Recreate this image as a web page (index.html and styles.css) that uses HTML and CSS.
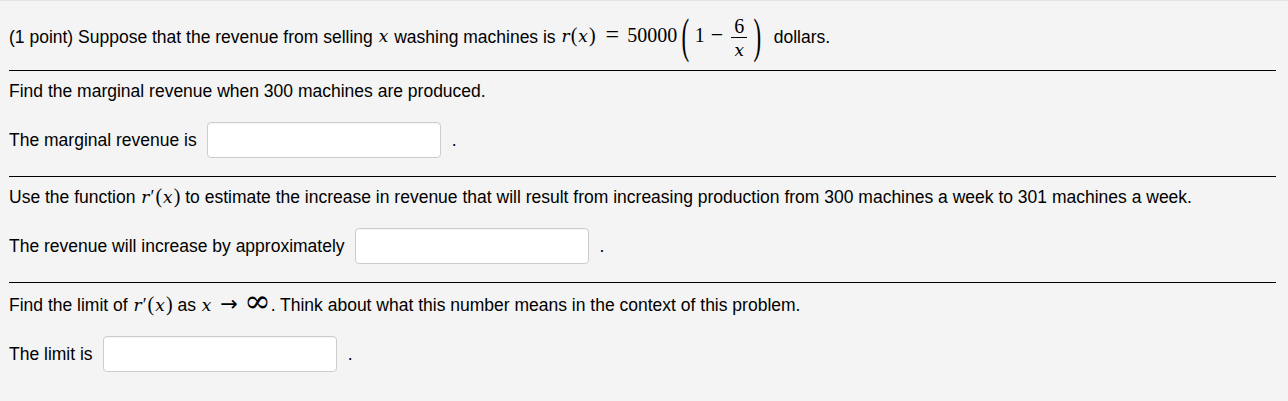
FILE: index.html
```html
<!DOCTYPE html>
<html>
<head>
<meta charset="utf-8">
<link rel="stylesheet" href="styles.css">
</head>
<body>
<div class="topbar"></div>
<div class="problem">
  <div class="intro">
    <span class="line">(1 point) Suppose that the revenue from selling <span class="math"><i class="v">x</i></span> washing machines is <span class="math"><i class="v">r</i>(<i class="v">x</i>)<span class="rel">=</span>50000<span class="big">(</span>1<span class="bin">−</span><span class="frac"><span class="num">6</span><span class="den"><i class="v">x</i></span></span><span class="big">)</span></span> dollars.</span>
  </div>
  <hr class="rule">
  <section class="part">
    <p class="q">Find the marginal revenue when 300 machines are produced.</p>
    <div class="answer"><span>The marginal revenue is</span><input class="box" type="text"><span class="dot">.</span></div>
  </section>
  <hr class="rule">
  <section class="part">
    <p class="q">Use the function <span class="math"><i class="v">r</i><span class="prime">′</span>(<i class="v">x</i>)</span> to estimate the increase in revenue that will result from increasing production from 300 machines a week to 301 machines a week.</p>
    <div class="answer"><span>The revenue will increase by approximately</span><input class="box" type="text"><span class="dot">.</span></div>
  </section>
  <hr class="rule">
  <section class="part">
    <p class="q">Find the limit of <span class="math"><i class="v">r</i><span class="prime">′</span>(<i class="v">x</i>)</span> as <span class="math"><i class="v">x</i><span class="arrow">→</span><span class="inf">∞</span></span>. Think about what this number means in the context of this problem.</p>
    <div class="answer"><span>The limit is</span><input class="box" type="text"><span class="dot">.</span></div>
  </section>
</div>
</body>
</html>
```
FILE: styles.css
```css
html, body {
  margin: 0;
  padding: 0;
  background: #f4f4f4;
  height: 100%;
}
body {
  font-family: "Liberation Sans", Arial, sans-serif;
  font-size: 17.5px;
  color: #000;
}
.topbar {
  height: 1px;
  background: #e4e4e4;
}
.problem {
  margin: 0 12px 0 9px;
}
.intro {
  height: 65px;
  padding-top: 4px;
  display: flex;
  align-items: center;
  line-height: 20px;
}
.math {
  font-family: "Liberation Serif", "Times New Roman", serif;
  font-size: 20px;
  line-height: 16px;
  white-space: nowrap;
}
.math .v {
  font-family: "DejaVu Serif", serif;
  font-style: italic;
  font-size: 17px;
  margin: 0 1px;
}
.rel {
  font-size: 24px;
  margin: 0 8px 0 10px;
}
.bin {
  font-size: 22px;
  margin: 0 6px;
}
.prime {
  font-size: 18px;
  margin-right: 1px;
}
.arrow {
  font-family: "DejaVu Sans", sans-serif;
  font-size: 21px;
  margin: 0 6px 0 8px;
}
.inf {
  font-family: "DejaVu Serif", serif;
  font-size: 32px;
  vertical-align: -1px;
}
.big {
  display: inline-block;
  transform: scale(1.15, 2.4);
  margin: 0 6px 0 5px;
  font-weight: 300;
}
.frac {
  display: inline-flex;
  flex-direction: column;
  align-items: center;
  vertical-align: middle;
  line-height: 22px;
  margin: 0 2px;
}
.frac .num {
  border-bottom: 1px solid #000;
  padding: 0 3px;
}
.frac .den .v {
  margin: 0;
}
.line > .math:last-child,
.line .math + .tail {
  margin-right: 2px;
}
.rule {
  height: 0;
  margin: 0;
  border: 0;
  border-top: 1px solid #000;
}
.part {
  padding: 10px 0 18px;
}
.q {
  margin: 0;
  line-height: 20px;
}
.answer {
  margin-top: 21px;
  display: flex;
  align-items: center;
  gap: 10px;
  line-height: 20px;
}
.box {
  box-sizing: border-box;
  width: 234px;
  height: 36px;
  margin: 0;
  background: #fff;
  border: 1px solid #cccccc;
  border-radius: 4px;
  box-shadow: inset 0 1px 1px rgba(0,0,0,0.04);
}
.dot {
  margin-left: 1px;
}
```
